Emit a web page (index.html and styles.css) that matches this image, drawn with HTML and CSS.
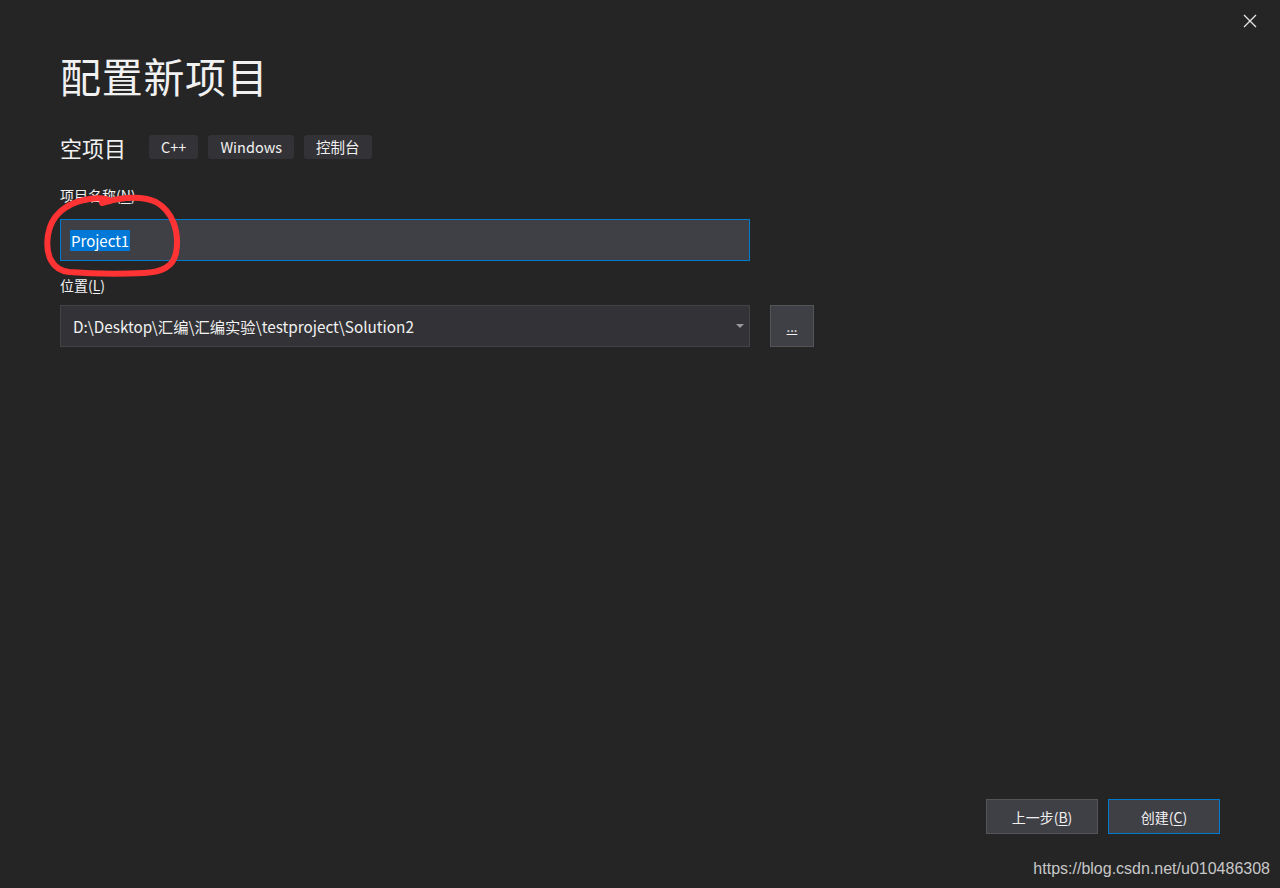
FILE: index.html
```html
<!DOCTYPE html>
<html lang="zh-CN">
<head>
  <meta charset="UTF-8">
  <title>配置新项目</title>
  <link rel="stylesheet" href="styles.css">
</head>
<body>
  <div class="dialog">
    <button class="close-btn" aria-label="关闭">
      <svg width="14" height="14" viewBox="0 0 14 14"><path d="M1 1L13 13M13 1L1 13" stroke="#e6e6e6" stroke-width="1.3"/></svg>
    </button>

    <h1 class="title">配置新项目</h1>

    <div class="template-row">
      <span class="template-name">空项目</span>
      <span class="tag">C++</span>
      <span class="tag">Windows</span>
      <span class="tag">控制台</span>
    </div>

    <label class="field-label">项目名称(<u>N</u>)</label>
    <div class="text-input focused">
      <span class="selected">Project1</span>
    </div>

    <label class="field-label">位置(<u>L</u>)</label>
    <div class="location-row">
      <div class="combo">
        <span>D:\Desktop\汇编\汇编实验\testproject\Solution2</span>
        <span class="caret"></span>
      </div>
      <button class="browse-btn"><u>...</u></button>
    </div>

    <div class="footer">
      <button class="btn">上一步(<u>B</u>)</button>
      <button class="btn primary">创建(<u>C</u>)</button>
    </div>

    <!-- 手绘标注 -->
    <svg class="annotation" width="150" height="90" viewBox="0 0 150 90">
      <path d="M58 10 C 75 5, 96 2, 112 9 C 128 18, 136 38, 132 60 C 129 74, 118 79, 100 80 C 80 81, 50 81, 25 79 C 8 77, 1 62, 4 42 C 7 22, 22 11, 40 7 C 52 4, 62 5, 66 8" fill="none" stroke="#ff3333" stroke-width="6" stroke-linecap="round"/>
    </svg>

    <div class="watermark">https://blog.csdn.net/u010486308</div>
  </div>
</body>
</html>
```

FILE: styles.css
```css
* { margin: 0; padding: 0; box-sizing: border-box; }
body {
  background: #252526;
  color: #f1f1f1;
  font-family: "Noto Sans CJK SC", "Noto Sans", sans-serif;
}
u { text-decoration: underline; text-underline-offset: 2px; }
button { font-family: inherit; color: inherit; }

.dialog {
  position: relative;
  height: 888px;
  padding: 47px 60px 54px;
  display: flex;
  flex-direction: column;
}

.close-btn {
  position: absolute;
  top: 13px;
  right: 23px;
  background: none;
  border: none;
  width: 14px;
  height: 14px;
}

.title {
  font-size: 41px;
  font-weight: 400;
  line-height: 56px;
  letter-spacing: 0.7px;
}

.template-row {
  display: flex;
  align-items: center;
  margin-top: 29px;
}
.template-name {
  font-size: 22px;
  line-height: 30px;
  margin-right: 23px;
}
.tag {
  background: #333337;
  border-radius: 3px;
  font-size: 14.5px;
  line-height: 24px;
  padding: 0 12px;
  margin-right: 10px;
}

.field-label {
  font-size: 14px;
  line-height: 20px;
  margin-top: 23px;
}
.text-input {
  width: 690px;
  height: 42px;
  margin-top: 14px;
  background: #3f3f46;
  border: 1px solid #3f3f46;
  display: flex;
  align-items: center;
  padding-left: 9px;
  font-size: 15px;
}
.text-input.focused { border-color: #007acc; }
.selected {
  background: #0078d7;
  color: #fff;
  line-height: 21px;
  padding: 0 1px;
}

.text-input + .field-label { margin-top: 14px; }

.location-row {
  display: flex;
  gap: 20px;
  margin-top: 10px;
}
.combo {
  width: 690px;
  height: 42px;
  background: #333337;
  border: 1px solid #434346;
  display: flex;
  align-items: center;
  justify-content: space-between;
  padding: 0 5px 0 12px;
  font-size: 15.3px;
}
.caret {
  width: 0;
  height: 0;
  border-left: 4px solid transparent;
  border-right: 4px solid transparent;
  border-top: 4px solid #999;
}
.browse-btn {
  width: 44px;
  height: 42px;
  background: #3f3f46;
  border: 1px solid #555558;
  font-size: 13px;
}

.footer {
  margin-top: auto;
  display: flex;
  justify-content: flex-end;
  gap: 10px;
}
.btn {
  width: 112px;
  height: 35px;
  background: #3f3f46;
  border: 1px solid #555558;
  font-size: 14px;
}
.btn.primary { border-color: #007acc; }

.annotation {
  position: absolute;
  left: 44px;
  top: 193px;
}

.watermark {
  position: absolute;
  right: 10px;
  bottom: 10px;
  font-family: "Liberation Sans", Arial, sans-serif;
  font-size: 16px;
  color: #c8c8c8;
}
```
